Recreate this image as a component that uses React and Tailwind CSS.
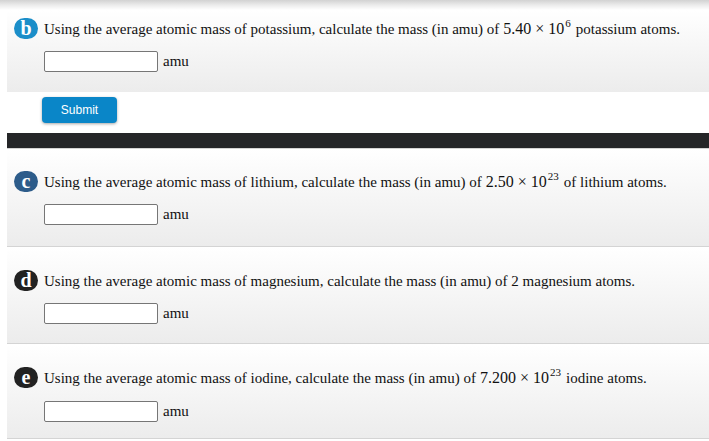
import React from "react";

const serif = { fontFamily: '"Liberation Serif", "Times New Roman", serif' };

function Badge({ letter, color }) {
  return (
    <span
      className={`flex h-[21px] w-[24px] shrink-0 items-center justify-center rounded-full text-white font-bold text-[20px] leading-none ${color}`}
      style={serif}
    >
      <span className="-mt-[2px]">{letter}</span>
    </span>
  );
}

function Num({ base, exp }) {
  return (
    <span className="ml-[4px] mr-[5px] whitespace-nowrap leading-none text-[16px]" style={serif}>
      <span>{base}</span>
      <span className="mx-[4px]">×</span>
      <span>10</span>
      <sup className="relative -top-[7px] ml-[1px] text-[11px] leading-none">{exp}</sup>
    </span>
  );
}

function AnswerRow({ mt }) {
  return (
    <div className={`flex items-center pl-[37px] ${mt}`}>
      <div className="h-[21px] w-[114px] rounded-[2px] border border-[#767676] bg-white" />
      <span className="ml-[5px] text-[15px] leading-none text-[#111]" style={serif}>amu</span>
    </div>
  );
}

function Part({ letter, color, children, pt, gap, pb, border }) {
  return (
    <div className={`bg-gradient-to-b from-white to-[#ececec] ${pt} ${pb} ${border}`}>
      <div className="flex h-[21px] items-center pl-[7px]">
        <Badge letter={letter} color={color} />
        <p className="ml-[6px] h-[20px] whitespace-nowrap text-[15px] leading-[20px] text-[#111]" style={serif}>
          {children}
        </p>
      </div>
      <AnswerRow mt={gap} />
    </div>
  );
}

export default function App() {
  return (
    <div className="relative h-[441px] w-[709px] overflow-hidden bg-white" style={serif}>
      <div className="h-[10px] bg-gradient-to-b from-[#d2d2d2] via-[#ebebeb] to-white" />
      <div className="pl-[7px]">
        <Part letter="b" color="bg-[#1b8ec9]" pt="pt-[8px]" gap="mt-[12px]" pb="pb-[20px]" border="">
          Using the average atomic mass of potassium, calculate the mass (in amu) of
          <Num base="5.40" exp="6" />
          potassium atoms.
        </Part>
        <div className="flex h-[41px] items-start pl-[35px] pt-[5px]">
          <button
            className="h-[26px] w-[75px] rounded-[4px] bg-[#0a86c8] text-[12px] text-white shadow-[0_1px_3px_rgba(0,0,0,0.35)]"
            style={{ fontFamily: '"Liberation Sans", Arial, sans-serif' }}
          >
            Submit
          </button>
        </div>
        <div className="h-[15px] bg-[#252628]" />
        <Part letter="c" color="bg-[#2d5c8a]" pt="pt-[22px]" gap="mt-[12px]" pb="pb-[21px]" border="border-t border-b border-[#d4d4d4]">
          Using the average atomic mass of lithium, calculate the mass (in amu) of
          <Num base="2.50" exp="23" />
          of lithium atoms.
        </Part>
        <Part letter="d" color="bg-[#222]" pt="pt-[23px]" gap="mt-[12px]" pb="pb-[19px]" border="border-b border-[#d4d4d4]">
          Using the average atomic mass of magnesium, calculate the mass (in amu) of 2 magnesium atoms.
        </Part>
        <Part letter="e" color="bg-[#222]" pt="pt-[23px]" gap="mt-[13px]" pb="pb-[16px]" border="border-b border-[#d4d4d4]">
          Using the average atomic mass of iodine, calculate the mass (in amu) of
          <Num base="7.200" exp="23" />
          iodine atoms.
        </Part>
      </div>
    </div>
  );
}
